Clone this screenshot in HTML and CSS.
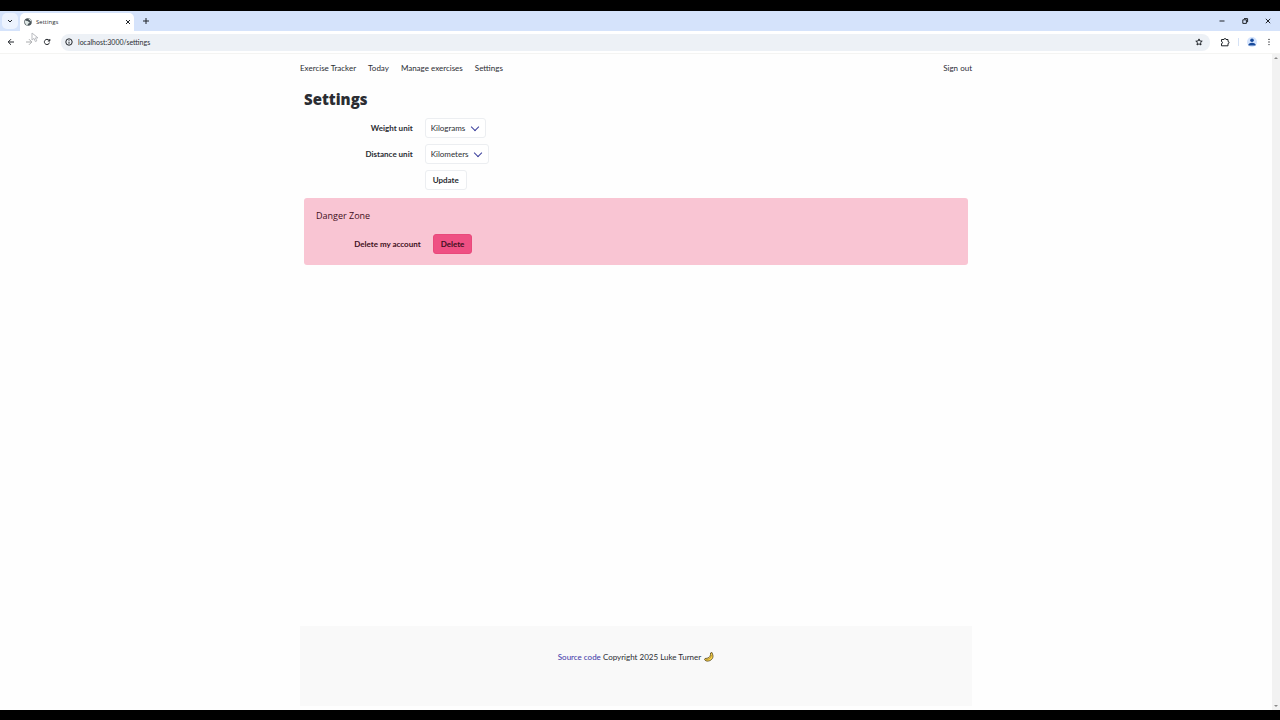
FILE: index.html
```html
<!DOCTYPE html>
<html lang="en">
  <head>
    <meta charset="UTF-8" />
    <meta name="viewport" content="width=device-width, initial-scale=1.0" />
    <title>Settings</title>
    <link rel="stylesheet" href="styles.css">
  </head>
  <body>
    <header class="browser">
      <div class="tab-strip">
        <button class="tab-search" aria-label="Search tabs">
          <svg class="icon" viewBox="0 0 8 8"><path d="M2 3l2 2 2-2" /></svg>
        </button>
        <div class="tab">
          <svg class="globe" viewBox="0 0 16 16">
            <circle cx="8" cy="8" r="7.5" fill="#4a5459" />
            <path d="M2 5c2 0 3 1 5 1s1 2 3 2 1 3-1 3-1 3-2 4c-3-1-6-4-5-10zM9 1c3 0 5 2 6 5-2 1-3 0-3-1S9 4 9 1z" fill="#dfe8e6" />
          </svg>
          <span class="tab-title">Settings</span>
          <button class="icon-button" aria-label="Close tab">
            <svg class="icon" viewBox="0 0 8 8"><path d="M2 2l4 4M6 2l-4 4" /></svg>
          </button>
        </div>
        <button class="icon-button new-tab" aria-label="New tab">
          <svg class="icon" viewBox="0 0 8 8"><path d="M4 1v6M1 4h6" /></svg>
        </button>
        <div class="window-buttons">
          <button class="icon-button" aria-label="Minimize">
            <svg class="icon" viewBox="0 0 8 8"><path d="M1.5 4h5" /></svg>
          </button>
          <button class="icon-button" aria-label="Restore">
            <svg class="icon" viewBox="0 0 8 8"><path d="M1.8 2.8h3.6v3.6H1.8zM3 1.6h3.6v3.6" /></svg>
          </button>
          <button class="icon-button" aria-label="Close">
            <svg class="icon" viewBox="0 0 8 8"><path d="M1.8 1.8l4.4 4.4M6.2 1.8L1.8 6.2" /></svg>
          </button>
        </div>
      </div>
      <div class="toolbar">
        <button class="icon-button" aria-label="Back">
          <svg class="icon" viewBox="0 0 8 8"><path d="M7 4H1.4M4 1.2L1.2 4 4 6.8" /></svg>
        </button>
        <button class="icon-button forward" aria-label="Forward">
          <svg class="icon" viewBox="0 0 8 8"><path d="M1 4h5.6M4 1.2L6.8 4 4 6.8" /></svg>
          <svg class="cursor" viewBox="0 0 8 11">
            <path d="M1 1v7l2-1.6 1.4 3.2 1.4-.7-1.4-3H7z" />
          </svg>
        </button>
        <button class="icon-button" aria-label="Reload">
          <svg class="icon" viewBox="0 0 8 8"><path d="M6.5 4.6A2.6 2.6 0 1 1 6 2.3L6.8 3M6.8 1v2H4.8" /></svg>
        </button>
        <div class="address-bar">
          <svg class="icon" viewBox="0 0 8 8"><circle cx="4" cy="4" r="3.2" /><path d="M4 3.7v2M4 2.2v.7" /></svg>
          <input class="address" type="text" value="localhost:3000/settings" aria-label="Address" />
          <button class="icon-button" aria-label="Bookmark">
            <svg class="icon" viewBox="0 0 8 8"><path d="M4 .9l.9 2.1 2.3.2-1.7 1.5.5 2.3-2-1.2-2 1.2.5-2.3L.8 3.2l2.3-.2z" /></svg>
          </button>
        </div>
        <div class="toolbar-buttons">
          <button class="icon-button" aria-label="Extensions">
            <svg class="icon extensions" viewBox="0 0 10 10"><path d="M1.5 2.5H4a1 1 0 0 1 2 0h2v2a1 1 0 0 1 0 2v2.3H1.5V6.6a1 1 0 0 0 0-2z" /></svg>
          </button>
          <span class="divider"></span>
          <button class="icon-button" aria-label="Profile">
            <svg class="profile" viewBox="0 0 10 10">
              <circle cx="5" cy="5" r="5" fill="#d3e3fd" />
              <circle cx="5" cy="3.2" r="1.8" />
              <path d="M1.5 8.6V7.4Q2 5.8 5 5.8t3.5 1.6v1.2z" />
            </svg>
          </button>
          <button class="icon-button" aria-label="Menu">
            <svg class="menu" viewBox="0 0 8 8">
              <circle cx="4" cy="1.4" r=".7" /><circle cx="4" cy="4" r=".7" /><circle cx="4" cy="6.6" r=".7" />
            </svg>
          </button>
        </div>
      </div>
    </header>

    <div class="viewport">
      <div class="page">
        <nav class="navbar">
          <a href="/">Exercise Tracker</a>
          <a href="/today">Today</a>
          <a href="/exercises">Manage exercises</a>
          <a href="/settings">Settings</a>
          <a class="sign-out" href="/sign-out">Sign out</a>
        </nav>

        <main class="section">
          <h1 class="title">Settings</h1>
          <form class="form">
            <div class="field">
              <label for="weightUnit">Weight unit</label>
              <div class="select">
                <select id="weightUnit" name="weightUnit">
                  <option>Kilograms</option>
                  <option>Pounds</option>
                </select>
              </div>
            </div>
            <div class="field">
              <label for="distanceUnit">Distance unit</label>
              <div class="select">
                <select id="distanceUnit" name="distanceUnit">
                  <option>Kilometers</option>
                  <option>Miles</option>
                </select>
              </div>
            </div>
            <div class="field">
              <button class="button update" type="submit">Update</button>
            </div>
          </form>

          <section class="danger-zone">
            <h2>Danger Zone</h2>
            <form class="field">
              <label for="delete">Delete my account</label>
              <button class="button danger" id="delete" type="submit">Delete</button>
            </form>
          </section>
        </main>

        <footer class="footer">
          <p><a href="/source">Source code</a> Copyright 2025 Luke Turner</p>
          <svg class="banana" viewBox="0 0 20 20">
            <path d="M13 2l3-1 1 3c3 6-1 13-8 14-4 1-7-1-8-3l1-2c6 0 11-3 11-8z" fill="#f9d34c" stroke="#4b3c16" stroke-width="1.5" />
            <path d="M3 15c6 1 11-3 12-9" fill="none" stroke="#8a6a1c" />
          </svg>
        </footer>
      </div>
      <div class="scrollbar">
        <svg viewBox="0 0 8 8"><path d="M2 5l2-2 2 2z" /></svg>
        <svg viewBox="0 0 8 8"><path d="M2 3l2 2 2-2z" /></svg>
      </div>
    </div>
  </body>
</html>
```
FILE: styles.css
```css
* {
  box-sizing: border-box;
}
body {
  display: flex;
  flex-direction: column;
  min-height: 100vh;
  margin: 0;
  border-top: 11px solid #000;
  border-bottom: 10px solid #000;
  background-color: #fefefe;
  color: #2b2d33;
  font-family: Lato, "Open Sans", sans-serif;
  font-size: 8px;
  line-height: 12px;
}
button,
input,
select {
  font: inherit;
  color: inherit;
}
svg {
  display: block;
  flex: none;
}
a {
  color: inherit;
  text-decoration: none;
}

/* Browser window */
.tab-strip {
  display: flex;
  align-items: center;
  height: 20px;
  padding: 0 8px 0 2px;
  background-color: #d5e3fb;
}
.icon {
  width: 8px;
  height: 8px;
  fill: none;
  stroke: #1f2328;
  stroke-width: 1;
}
.icon-button {
  display: flex;
  padding: 0;
  border: 0;
  background: none;
}
.tab-search {
  display: flex;
  align-items: center;
  justify-content: center;
  width: 16px;
  height: 16px;
  padding: 0;
  border: 0;
  border-radius: 5px;
  background-color: #edf3fe;
}
.tab {
  display: flex;
  align-items: center;
  align-self: flex-end;
  gap: 4px;
  width: 114px;
  height: 18px;
  margin-left: 2px;
  padding: 0 2px 0 4px;
  border-radius: 5px 5px 0 0;
  background-color: #fff;
}
.globe {
  width: 8px;
  height: 8px;
}
.tab-title {
  flex: 1;
  font-family: "Open Sans", sans-serif;
  font-size: 6px;
}
.new-tab {
  margin-left: 8px;
}
.window-buttons {
  display: flex;
  gap: 15px;
  margin-left: auto;
}
.toolbar {
  display: flex;
  align-items: center;
  gap: 10px;
  height: 23px;
  padding: 0 7px;
  border-bottom: 1px solid #f4f4f2;
  background-color: #fff;
}
.forward {
  position: relative;
}
.forward .icon {
  stroke: #a9abad;
}
.cursor {
  position: absolute;
  top: -6px;
  left: 6px;
  width: 8px;
  height: 11px;
  fill: #fff;
  stroke: #b9bbc0;
}
.address-bar {
  display: flex;
  flex: 1;
  align-items: center;
  gap: 5px;
  height: 17px;
  padding: 0 7px 0 4px;
  border-radius: 8px;
  background-color: #edf1f6;
}
.address {
  flex: 1;
  min-width: 0;
  padding: 0;
  border: 0;
  background: none;
  font-size: 7px;
}
.toolbar-buttons {
  display: flex;
  align-items: center;
  gap: 8px;
}
.extensions,
.profile {
  width: 10px;
  height: 10px;
}
.profile {
  fill: #174a9b;
}
.menu {
  width: 8px;
  height: 8px;
  fill: #1f2328;
}
.divider {
  width: 1px;
  height: 8px;
  background-color: #d6e2f5;
}

/* Page */
.viewport {
  display: flex;
  flex: 1;
}
.page {
  display: flex;
  flex: 1;
  flex-direction: column;
  max-width: 672px;
  margin: 0 auto;
  padding-bottom: 4px;
}
.scrollbar {
  display: flex;
  flex-direction: column;
  justify-content: space-between;
  width: 8px;
  background-color: #f2f2f2;
}
.scrollbar svg {
  width: 8px;
  height: 8px;
  fill: #8a8a8a;
}
.navbar {
  display: flex;
  gap: 12px;
  align-items: center;
  height: 28px;
}
.sign-out {
  margin-left: auto;
}
.section {
  padding: 8px 4px;
}
.title {
  margin: 0 0 10px;
  font-family: "Open Sans", sans-serif;
  font-size: 15px;
  font-weight: 800;
  line-height: 18px;
}
.form {
  display: flex;
  flex-direction: column;
  gap: 6px;
}
.field {
  display: grid;
  grid-template-columns: 1fr 5fr;
  column-gap: 12px;
  align-items: center;
  justify-items: start;
}
.field label {
  justify-self: end;
  font-weight: 700;
}
.select {
  position: relative;
}
.select::after {
  content: "";
  position: absolute;
  top: 6px;
  right: 8px;
  width: 5px;
  height: 5px;
  border: solid #3b3f9c;
  border-width: 0 1px 1px 0;
  transform: rotate(45deg);
}
.select select {
  height: 20px;
  padding: 0 19px 0 5px;
  border: 1px solid #eceef1;
  border-radius: 3px;
  background-color: #fff;
  appearance: none;
}
.button {
  height: 20px;
  padding: 0 7px;
  border: 1px solid #eceef1;
  border-radius: 3px;
  background-color: #fff;
  font-weight: 700;
}
.update {
  grid-column: 2;
}
.danger-zone {
  margin-top: 8px;
  padding: 12px 12px 11px;
  border-radius: 3px;
  background-color: #f9c5d3;
  color: #3f0f20;
}
.danger-zone h2 {
  margin: 0 0 12px;
  font-family: "Open Sans", sans-serif;
  font-size: 9px;
  font-weight: 400;
  line-height: 12px;
}
.danger {
  border-color: #e84a7b;
  background-color: #ef5083;
}
.footer {
  display: flex;
  align-items: flex-start;
  justify-content: center;
  gap: 3px;
  height: 80px;
  margin-top: auto;
  padding-top: 25px;
  background-color: #f9f9f9;
}
.footer p {
  margin: 0;
}
.footer a {
  color: #3b35a8;
}
.banana {
  width: 10px;
  height: 12px;
}
```
